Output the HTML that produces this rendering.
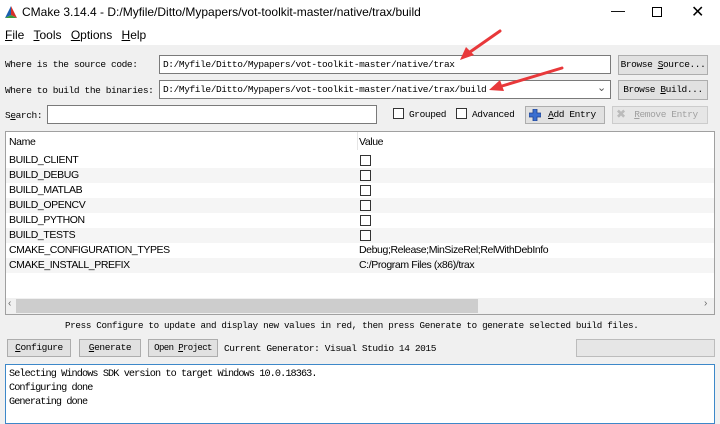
<!DOCTYPE html>
<html><head><meta charset="utf-8"><style>
*{box-sizing:border-box;margin:0;padding:0}
body{width:720px;height:421px;overflow:hidden;background:#f0f0f0;position:relative;font-family:"Liberation Mono",monospace;font-size:9px;color:#000}
.a{position:absolute;white-space:nowrap}
.m{font-family:"Liberation Mono",monospace;font-size:9.5px;letter-spacing:-0.4px}
.s{font-family:"Liberation Sans",sans-serif}
.field{background:#fff;border:1px solid #7a7a7a;padding:2px 3px;line-height:13px}
.btn{background:#e1e1e1;border:1px solid #adadad;text-align:center;line-height:17px}
.cb{width:11px;height:11px;border:1px solid #333;background:#fff}
.row{position:absolute;left:0;width:708px;height:15px;font-family:"Liberation Sans",sans-serif;font-size:10.5px;letter-spacing:-0.4px;line-height:15px}
.row span{position:absolute;left:3px}
.row i{position:absolute;left:354px;top:2px;width:11px;height:11px;border:1px solid #333;background:#fff}
.row b{position:absolute;left:353px;font-weight:normal}
</style></head><body>
<div class="a" style="left:0;top:0;width:720px;height:45px;background:#fff"></div>
<svg class="a" style="left:4px;top:5px" width="14" height="14" viewBox="0 0 14 14"><path d="M7 1 L1 13 L7 10Z" fill="#1b5fb0"/><path d="M7 1 L13 13 L7 10Z" fill="#d7302a"/><path d="M1 13 L13 13 L7 10Z" fill="#3a9a3a"/></svg>
<div class="a s" style="left:22px;top:5px;font-size:12px;color:#000">CMake 3.14.4 - D:/Myfile/Ditto/Mypapers/vot-toolkit-master/native/trax/build</div>
<div class="a s" style="left:611px;top:2px;font-size:14px">—</div>
<div class="a" style="left:652px;top:7px;width:10px;height:10px;border:1px solid #000"></div>
<div class="a s" style="left:691px;top:2px;font-size:16px;font-weight:300">✕</div>
<div class="a s" style="left:5px;top:28px;font-size:12px;word-spacing:6px"><u>F</u>ile <u>T</u>ools <u>O</u>ptions <u>H</u>elp</div>

<div class="a m" style="left:5px;top:59px">Where is the source code:</div>
<div class="a field m" style="left:159px;top:55px;width:452px;height:19px">D:/Myfile/Ditto/Mypapers/vot-toolkit-master/native/trax</div>
<div class="a btn m" style="left:618px;top:55px;width:90px;height:20px">Browse <u>S</u>ource...</div>
<div class="a m" style="left:5px;top:85px">Where to build the binaries:</div>
<div class="a field m" style="left:159px;top:80px;width:452px;height:19px">D:/Myfile/Ditto/Mypapers/vot-toolkit-master/native/trax/build</div>
<div class="a s" style="left:597px;top:81px;font-size:11px;color:#555">⌄</div>
<div class="a btn m" style="left:618px;top:80px;width:90px;height:20px">Browse <u>B</u>uild...</div>
<div class="a m" style="left:5px;top:110px">S<u>e</u>arch:</div>
<div class="a field" style="left:47px;top:105px;width:330px;height:19px"></div>
<div class="a cb" style="left:393px;top:108px"></div><div class="a m" style="left:409px;top:109px">Grouped</div>
<div class="a cb" style="left:456px;top:108px"></div><div class="a m" style="left:472px;top:109px">Advanced</div>
<div class="a btn m" style="left:525px;top:106px;width:80px;height:18px;line-height:16px;padding-left:14px">
<u>A</u>dd Entry</div>
<svg class="a" style="left:529px;top:109px" width="12" height="12"><path d="M4 0h4v4h4v4h-4v4h-4v-4h-4v-4h4z" fill="#3a6fd0" stroke="#1f3f8a" stroke-width="0.8"/></svg>
<div class="a btn m" style="left:612px;top:106px;width:96px;height:18px;line-height:16px;color:#a0a0a0;background:#e6e6e6;border-color:#ccc;padding-left:12px"><u>R</u>emove Entry</div>
<div class="a s" style="left:616px;top:107px;color:#bbb;font-size:12px">✖</div>

<div class="a" style="left:5px;top:131px;width:710px;height:184px;background:#fff;border:1px solid #a0a0a0;overflow:hidden">
<div class="a" style="left:351px;top:0;width:1px;height:18px;background:#e5e5e5"></div>
<div class="row" style="top:3px"><span>Name</span><b>Value</b></div>
<div class="row" style="top:21px"><span>BUILD_CLIENT</span><i></i></div>
<div class="row" style="top:36px;background:#f5f5f5"><span>BUILD_DEBUG</span><i></i></div>
<div class="row" style="top:51px"><span>BUILD_MATLAB</span><i></i></div>
<div class="row" style="top:66px;background:#f5f5f5"><span>BUILD_OPENCV</span><i></i></div>
<div class="row" style="top:81px"><span>BUILD_PYTHON</span><i></i></div>
<div class="row" style="top:96px;background:#f5f5f5"><span>BUILD_TESTS</span><i></i></div>
<div class="row" style="top:111px"><span>CMAKE_CONFIGURATION_TYPES</span><b>Debug;Release;MinSizeRel;RelWithDebInfo</b></div>
<div class="row" style="top:126px;background:#f5f5f5"><span>CMAKE_INSTALL_PREFIX</span><b>C:/Program Files (x86)/trax</b></div>
<div class="a" style="left:0;top:166px;width:708px;height:16px;background:#f0f0f0"></div>
<div class="a" style="left:10px;top:167px;width:462px;height:14px;background:#cdcdcd"></div>
<div class="a s" style="left:2px;top:166px;font-size:10px;color:#666">‹</div>
<div class="a s" style="left:698px;top:166px;font-size:10px;color:#666">›</div>
</div>

<div class="a m" style="left:65px;top:320px;font-size:9.2px;letter-spacing:-0.3px">Press Configure to update and display new values in red, then press Generate to generate selected build files.</div>
<div class="a btn m" style="left:7px;top:339px;width:64px;height:18px;line-height:16px"><u>C</u>onfigure</div>
<div class="a btn m" style="left:79px;top:339px;width:62px;height:18px;line-height:16px"><u>G</u>enerate</div>
<div class="a btn m" style="left:148px;top:339px;width:70px;height:18px;line-height:16px;font-size:9px;letter-spacing:-0.6px">Open <u>P</u>roject</div>
<div class="a m" style="left:224px;top:343px">Current Generator: Visual Studio 14 2015</div>
<div class="a" style="left:576px;top:339px;width:139px;height:18px;background:#e6e6e6;border:1px solid #bcbcbc"></div>

<div class="a" style="left:5px;top:364px;width:710px;height:60px;background:#fff;border:1px solid #3d88c9"></div>
<div class="a m" style="left:9px;top:368px;font-size:10.2px;letter-spacing:-0.9px;line-height:14px">Selecting Windows SDK version  to target Windows 10.0.18363.<br>Configuring done<br>Generating done</div>

<svg class="a" style="left:0;top:0" width="720" height="421">
<path d="M500 31 L470 52" stroke="#e8383a" stroke-width="3" stroke-linecap="round"/>
<path d="M460 60 L466 47 L474 55Z" fill="#e8383a"/>
<path d="M562 68 L502 86" stroke="#e8383a" stroke-width="3" stroke-linecap="round"/>
<path d="M489 90 L500 80 L504 91Z" fill="#e8383a"/>
</svg>
</body></html>
